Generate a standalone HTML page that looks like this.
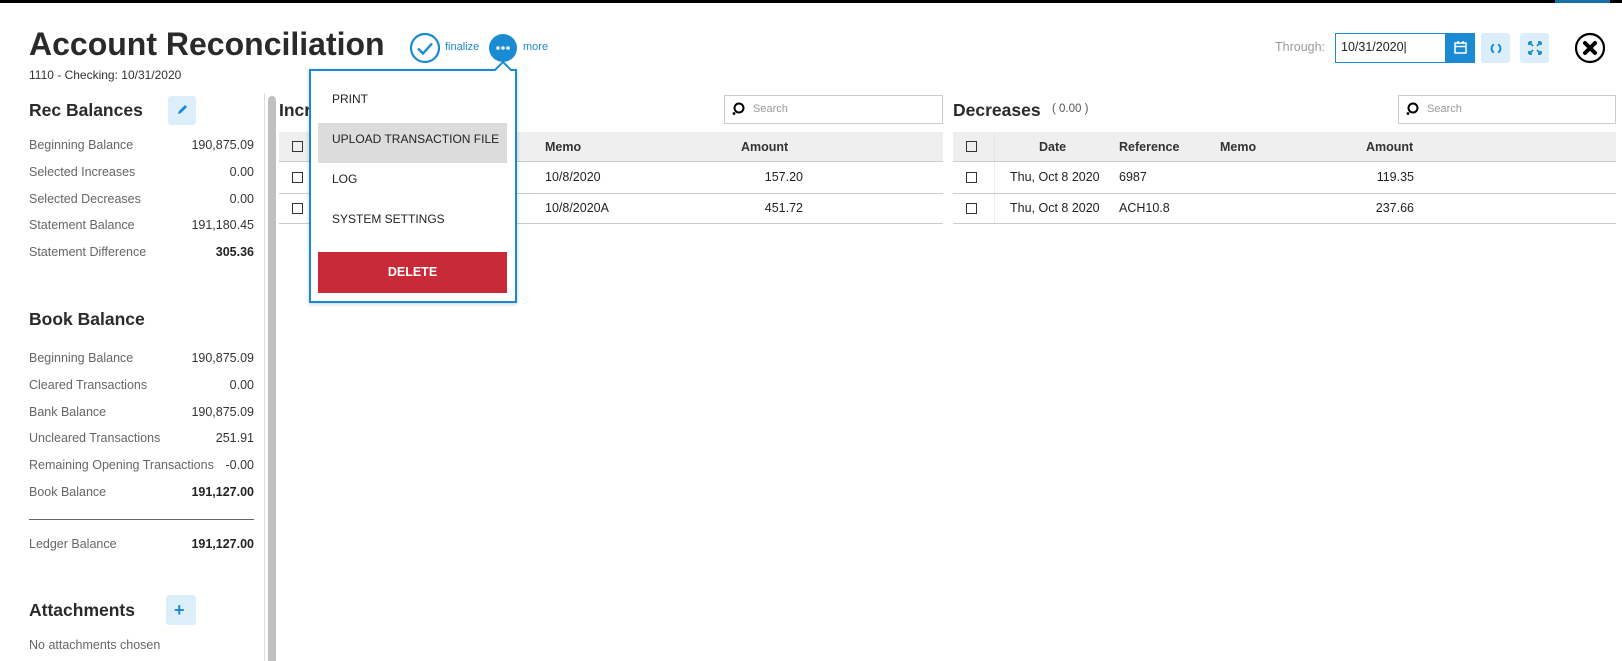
<!DOCTYPE html>
<html><head><style>
*{margin:0;padding:0;box-sizing:border-box}
body{width:1622px;height:661px;overflow:hidden;background:#fff;font-family:"Liberation Sans",sans-serif;color:#333;position:relative}
.a{position:absolute;white-space:nowrap}
.lbl{font-size:12.5px;color:#666}
.val{font-size:12.5px;color:#333;text-align:right}
.b{font-weight:bold;color:#222}
.h2{font-size:17.5px;font-weight:bold;color:#2a2a2a}
.cb{position:absolute;width:11px;height:11px;border:1.5px solid #333}
.t{font-size:12.5px;color:#222}
.th{font-size:12.5px;font-weight:bold;color:#333}
.mi{font-size:12px;color:#222}
</style></head><body>
<div class="a" style="left:0;top:0;width:1622px;height:3px;background:#000"></div>
<div class="a" style="left:1555px;top:0;width:55px;height:3px;background:#1a6fa8"></div>

<div class="a" style="left:29px;top:26px;font-size:32px;font-weight:bold;color:#2a2a2a">Account Reconciliation</div>
<div class="a" style="left:29px;top:68px;font-size:12px;color:#333">1110 - Checking: 10/31/2020</div>

<svg class="a" style="left:409px;top:32px" width="32" height="32"><circle cx="16" cy="16" r="14" fill="none" stroke="#1a8ad4" stroke-width="2.2"/><path d="M9 16.5l5 5 9-10" fill="none" stroke="#1a8ad4" stroke-width="2.4"/></svg>
<div class="a" style="left:445px;top:41px;font-size:11px;color:#1a8ad4">finalize</div>
<svg class="a" style="left:488px;top:33px" width="30" height="36"><circle cx="15" cy="15" r="14" fill="#1a8ad4"/><circle cx="10" cy="15" r="1.8" fill="#fff"/><circle cx="15" cy="15" r="1.8" fill="#fff"/><circle cx="20" cy="15" r="1.8" fill="#fff"/></svg>
<div class="a" style="left:523px;top:41px;font-size:11px;color:#1a8ad4">more</div>

<div class="a" style="left:1275px;top:40px;font-size:12.5px;color:#999">Through:</div>
<div class="a" style="left:1335px;top:33px;width:111px;height:30px;border:1.5px solid #1a8ad4;font-size:12.5px;padding:6px 0 0 5px;color:#222">10/31/2020|</div>
<div class="a" style="left:1446px;top:33px;width:29px;height:30px;background:#1a8ad4"></div>
<svg class="a" style="left:1453px;top:40px" width="16" height="16"><rect x="2" y="3" width="11" height="10" fill="none" stroke="#fff" stroke-width="1.5"/><path d="M2 6.5h11M5 1v3M10 1v3" stroke="#fff" stroke-width="1.5"/></svg>
<div class="a" style="left:1481px;top:33px;width:29px;height:30px;background:#dceefa;border-radius:3px"></div>
<svg class="a" style="left:1488px;top:41px" width="16" height="16"><path d="M6 3.5A4.5 4.5 0 0 0 6 11.5M10 3.5A4.5 4.5 0 0 1 10 11.5" fill="none" stroke="#1a8ad4" stroke-width="2"/></svg>
<div class="a" style="left:1520px;top:33px;width:29px;height:30px;background:#dceefa;border-radius:3px"></div>
<svg class="a" style="left:1527px;top:40px" width="16" height="16"><path d="M2 2l4 4M2 2h3M2 2v3M14 2l-4 4M14 2h-3M14 2v3M2 14l4-4M2 14h3M2 14v-3M14 14l-4-4M14 14h-3M14 14v-3" stroke="#1a8ad4" stroke-width="1.8" fill="none"/></svg>
<svg class="a" style="left:1574px;top:32px" width="32" height="32"><circle cx="16" cy="16" r="14" fill="#fff" stroke="#000" stroke-width="2.2"/><path d="M11 11l10 10M21 11l-10 10" stroke="#000" stroke-width="4" stroke-linecap="round"/></svg>

<div class="a h2" style="left:29px;top:100px">Rec Balances</div>
<div class="a" style="left:168px;top:96px;width:28px;height:29px;background:#dceefa;border-radius:3px"></div>
<svg class="a" style="left:175px;top:103px" width="14" height="14"><path d="M3 11l1-3 6-6 2 2-6 6z" fill="#1a8ad4"/></svg>

<div class="a lbl" style="left:29px;top:138px">Beginning Balance</div><div class="a val" style="right:1368px;top:138px">190,875.09</div>
<div class="a lbl" style="left:29px;top:165px">Selected Increases</div><div class="a val" style="right:1368px;top:165px">0.00</div>
<div class="a lbl" style="left:29px;top:192px">Selected Decreases</div><div class="a val" style="right:1368px;top:192px">0.00</div>
<div class="a lbl" style="left:29px;top:218px">Statement Balance</div><div class="a val" style="right:1368px;top:218px">191,180.45</div>
<div class="a lbl" style="left:29px;top:245px">Statement Difference</div><div class="a val b" style="right:1368px;top:245px">305.36</div>

<div class="a h2" style="left:29px;top:309px">Book Balance</div>
<div class="a lbl" style="left:29px;top:351px">Beginning Balance</div><div class="a val" style="right:1368px;top:351px">190,875.09</div>
<div class="a lbl" style="left:29px;top:378px">Cleared Transactions</div><div class="a val" style="right:1368px;top:378px">0.00</div>
<div class="a lbl" style="left:29px;top:405px">Bank Balance</div><div class="a val" style="right:1368px;top:405px">190,875.09</div>
<div class="a lbl" style="left:29px;top:431px">Uncleared Transactions</div><div class="a val" style="right:1368px;top:431px">251.91</div>
<div class="a lbl" style="left:29px;top:458px">Remaining Opening Transactions</div><div class="a val" style="right:1368px;top:458px">-0.00</div>
<div class="a lbl" style="left:29px;top:485px">Book Balance</div><div class="a val b" style="right:1368px;top:485px">191,127.00</div>
<div class="a" style="left:29px;top:519px;width:225px;height:1px;background:#666"></div>
<div class="a lbl" style="left:29px;top:537px">Ledger Balance</div><div class="a val b" style="right:1368px;top:537px">191,127.00</div>

<div class="a h2" style="left:29px;top:600px">Attachments</div>
<div class="a" style="left:166px;top:595px;width:30px;height:30px;background:#dceefa;border-radius:3px"></div>
<div class="a" style="left:174px;top:600px;font-size:18px;font-weight:bold;color:#1a8ad4">+</div>
<div class="a lbl" style="left:29px;top:638px">No attachments chosen</div>

<div class="a" style="left:264px;top:93px;width:1px;height:568px;background:#ddd"></div>
<div class="a" style="left:268px;top:96px;width:8px;height:565px;background:#c0c0c0;border-radius:4px 4px 0 0"></div>

<div class="a h2" style="left:279px;top:100px">Increases</div>
<div class="a" style="left:724px;top:95px;width:219px;height:29px;border:1px solid #ccc"></div>
<svg class="a" style="left:731px;top:102px" width="14" height="14"><circle cx="8" cy="6" r="4.5" fill="none" stroke="#000" stroke-width="2"/><circle cx="3" cy="11.5" r="1.4" fill="#000"/></svg>
<div class="a" style="left:753px;top:103px;font-size:11px;color:#999">Search</div>
<div class="a" style="left:279px;top:132px;width:664px;height:30px;background:#efefef;border-bottom:1px solid #ccc"></div>
<div class="cb" style="left:292px;top:141px"></div>
<div class="a th" style="left:545px;top:140px">Memo</div>
<div class="a th" style="left:741px;top:140px">Amount</div>
<div class="cb" style="left:292px;top:172px"></div><div class="a t" style="left:545px;top:170px">10/8/2020</div><div class="a t" style="right:819px;top:170px">157.20</div>
<div class="a" style="left:279px;top:193px;width:664px;height:1px;background:#ccc"></div>
<div class="cb" style="left:292px;top:203px"></div><div class="a t" style="left:545px;top:201px">10/8/2020A</div><div class="a t" style="right:819px;top:201px">451.72</div>
<div class="a" style="left:279px;top:223px;width:664px;height:1px;background:#ccc"></div>

<div class="a h2" style="left:953px;top:100px">Decreases</div>
<div class="a" style="left:1052px;top:103px;font-size:11.5px;color:#555">( 0.00 )</div>
<div class="a" style="left:1398px;top:95px;width:218px;height:29px;border:1px solid #ccc"></div>
<svg class="a" style="left:1405px;top:102px" width="14" height="14"><circle cx="8" cy="6" r="4.5" fill="none" stroke="#000" stroke-width="2"/><circle cx="3" cy="11.5" r="1.4" fill="#000"/></svg>
<div class="a" style="left:1427px;top:103px;font-size:11px;color:#999">Search</div>
<div class="a" style="left:953px;top:132px;width:663px;height:30px;background:#efefef;border-bottom:1px solid #ccc"></div>
<div class="a" style="left:994px;top:132px;width:0;height:91px;border-left:1px dotted #ddd"></div>
<div class="cb" style="left:966px;top:141px"></div>
<div class="a th" style="left:1039px;top:140px">Date</div>
<div class="a th" style="left:1119px;top:140px">Reference</div>
<div class="a th" style="left:1220px;top:140px">Memo</div>
<div class="a th" style="left:1366px;top:140px">Amount</div>
<div class="cb" style="left:966px;top:172px"></div><div class="a t" style="left:1010px;top:170px">Thu, Oct 8 2020</div><div class="a t" style="left:1119px;top:170px">6987</div><div class="a t" style="right:208px;top:170px">119.35</div>
<div class="a" style="left:953px;top:193px;width:663px;height:1px;background:#ccc"></div>
<div class="cb" style="left:966px;top:203px"></div><div class="a t" style="left:1010px;top:201px">Thu, Oct 8 2020</div><div class="a t" style="left:1119px;top:201px">ACH10.8</div><div class="a t" style="right:208px;top:201px">237.66</div>
<div class="a" style="left:953px;top:223px;width:663px;height:1px;background:#ccc"></div>

<div class="a" style="left:309px;top:69px;width:208px;height:234px;background:#fff;border:2px solid #1a8ad4;box-shadow:0 1px 4px rgba(0,0,0,.2)"></div>
<svg class="a" style="left:494px;top:61px" width="18" height="10"><path d="M0 10L9 1l9 9" fill="#fff" stroke="#1a8ad4" stroke-width="2"/></svg>
<div class="a mi" style="left:332px;top:92px">PRINT</div>
<div class="a" style="left:318px;top:123px;width:189px;height:40px;background:#dcdcdc"></div>
<div class="a mi" style="left:332px;top:132px">UPLOAD TRANSACTION FILE</div>
<div class="a mi" style="left:332px;top:172px">LOG</div>
<div class="a mi" style="left:332px;top:212px">SYSTEM SETTINGS</div>
<div class="a" style="left:318px;top:252px;width:189px;height:41px;background:#c92a37;color:#fff;font-size:12.5px;font-weight:bold;text-align:center;line-height:41px">DELETE</div>
</body></html>
